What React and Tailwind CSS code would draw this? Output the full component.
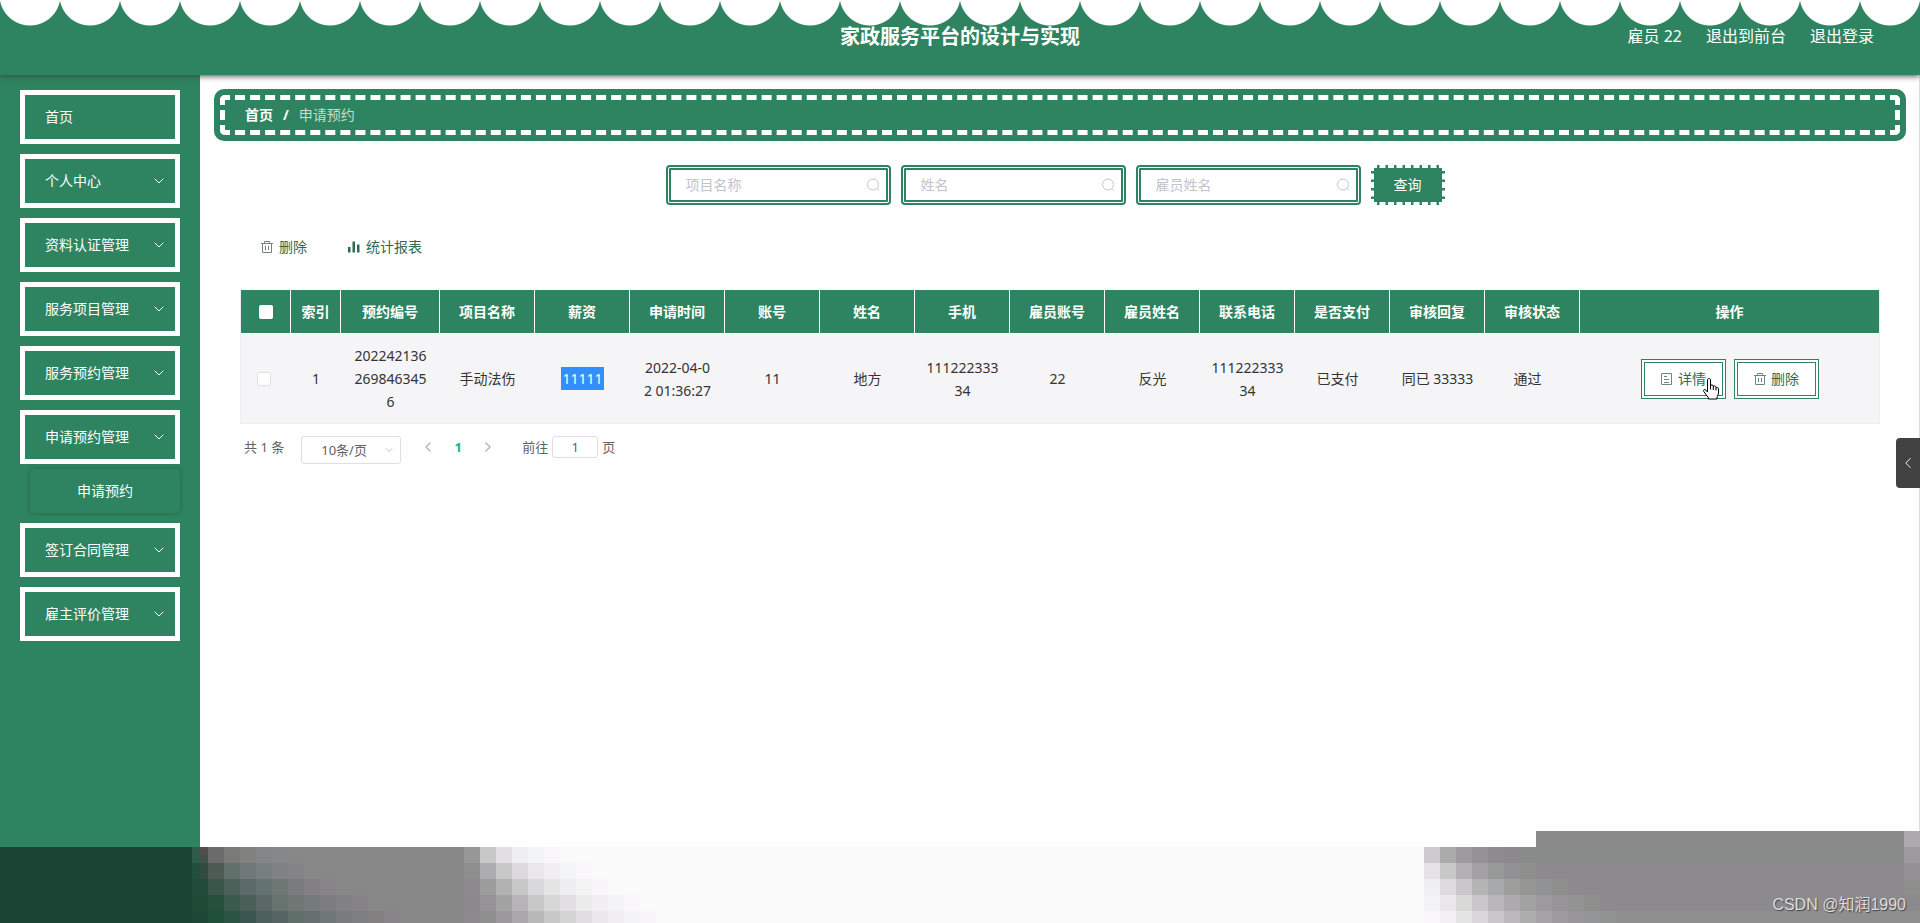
import { ChevronDown, ChevronLeft, ChevronRight } from 'lucide-react';

const menu = [
  { label: '首页' },
  { label: '个人中心', children: [] },
  { label: '资料认证管理', children: [] },
  { label: '服务项目管理', children: [] },
  { label: '服务预约管理', children: [] },
  { label: '申请预约管理', children: ['申请预约'] },
  { label: '签订合同管理', children: [] },
  { label: '雇主评价管理', children: [] },
];

const columns = [
  { key: 'no', label: '预约编号', width: 'w-[99px]' },
  { key: 'project', label: '项目名称', width: 'w-[95px]' },
  { key: 'salary', label: '薪资', width: 'w-[95px]' },
  { key: 'time', label: '申请时间', width: 'w-[95px]' },
  { key: 'account', label: '账号', width: 'w-[95px]' },
  { key: 'name', label: '姓名', width: 'w-[95px]' },
  { key: 'phone', label: '手机', width: 'w-[95px]' },
  { key: 'staffAccount', label: '雇员账号', width: 'w-[95px]' },
  { key: 'staffName', label: '雇员姓名', width: 'w-[95px]' },
  { key: 'staffPhone', label: '联系电话', width: 'w-[95px]' },
  { key: 'paid', label: '是否支付', width: 'w-[95px]', status: true },
  { key: 'reply', label: '审核回复', width: 'w-[95px]' },
  { key: 'state', label: '审核状态', width: 'w-[95px]', status: true },
];

const rows = [
  {
    no: '202242136\n269846345\n6',
    project: '手动法伤',
    salary: '11111',
    time: '2022-04-0\n2 01:36:27',
    account: '11',
    name: '地方',
    phone: '111222333\n34',
    staffAccount: '22',
    staffName: '反光',
    staffPhone: '111222333\n34',
    paid: '已支付',
    reply: '同已 33333',
    state: '通过',
  },
];

// 16px mosaic cells, one array per row
const fadeFromSidebar = [
  ['#2e5b4a', '#6b6b6b', '#7a7b78', '#828280', '#838587', '#85878b'],
  ['#20503c', '#4f5a52', '#61706a', '#707878', '#78807f', '#7f8184', '#848386'],
  ['#234b3b', '#38574a', '#4c605a', '#5c6b67', '#657370', '#6d7874', '#787c7d', '#828084', '#878386'],
  ['#1f4a36', '#27503c', '#3a5a4d', '#4a5f58', '#5b6764', '#67736f', '#6f7674', '#757a7a', '#7d7d80', '#828183', '#858385'],
  ['#1c4835', '#20503a', '#2b5445', '#3b5650', '#4c5f5b', '#566662', '#5f6f69', '#67706e', '#6f7877', '#787c7c', '#7c7e7f', '#828081', '#868486'],
];

const fadeToWhite = [
  ['#979797', '#c8c8c8', '#e2e0e3', '#efeff1', '#f3f4f8', '#f9f7fb'],
  ['#8f8f8f', '#adadaf', '#c8c8c8', '#dcdadd', '#e9e7ea', '#f1eff2', '#f4f5f9', '#f9f7fb'],
  ['#8d8a8e', '#9c9c9c', '#b2b2b2', '#c8c8c8', '#d9d9db', '#e5e5e5', '#eeeef0', '#f3f3f3', '#f8f6fa'],
  ['#8b888c', '#959396', '#a3a3a3', '#b6b4b8', '#c8c8c8', '#d7d7d7', '#e2e0e3', '#ebebeb', '#f1eff2', '#f4f4f8', '#f9f7fb'],
  ['#8c8a8d', '#8f8f8f', '#9c999d', '#aaa8ac', '#b9b9b9', '#c8c8c8', '#d4d4d4', '#e0dee1', '#e9e7ea', '#f0eef1', '#f4f4f8', '#f8f6fa'],
];

const fadeFromWhite = [
  ['#cdcbce', '#ababab', '#9c9a9d', '#949295', '#8f8c90', '#8c898d'],
  ['#e5e3e6', '#c8c8c8', '#b2b0b3', '#a3a1a4', '#989999', '#929193', '#8f8f8d'],
  ['#f0eff1', '#dddbde', '#c9c7ca', '#b3b4b3', '#a8a9aa', '#9e9e9d', '#969695', '#919294', '#8f908d'],
  ['#f4f4f8', '#e9e7ea', '#d9d9d8', '#c9c7ca', '#b9b7bb', '#acaaad', '#a2a2a3', '#9c9a9d', '#979597', '#929392', '#8f908d'],
  ['#f9f7fb', '#f2f0f3', '#e5e5e5', '#d9d7da', '#c9c7ca', '#bbb9bc', '#aeaeae', '#a5a3a6', '#9d9b9e', '#989698', '#949596', '#919292'],
];

function Cells({ data, x = 0, y = 0 }) {
  return data.map((row, r) =>
    row.map((fill, c) => (
      <rect key={`${r}-${c}`} x={x + c * 16} y={y + r * 16} width="16" height="16" fill={fill} />
    ))
  );
}

function Mosaic() {
  return (
    <div className="pointer-events-none absolute inset-x-0 bottom-0 flex h-[92px] items-end justify-between">
      <div className="absolute inset-x-0 bottom-0 h-[76px] bg-[#fafafa]" />
      <svg className="relative" width="664" height="76" shapeRendering="crispEdges" aria-hidden="true">
        <rect width="192" height="76" fill="#1a4534" />
        <rect x="192" width="272" height="76" fill="#888888" />
        <Cells data={fadeFromSidebar} x={192} />
        <rect x="200" width="8" height="8" fill="#554d49" />
        <rect x="200" y="8" width="8" height="8" fill="#405148" />
        <rect x="200" y="16" width="8" height="16" fill="#324a3f" />
        <Cells data={fadeToWhite} x={464} />
      </svg>
      <svg className="relative" width="496" height="92" shapeRendering="crispEdges" aria-hidden="true">
        <rect x="112" width="384" height="32" fill="#888988" />
        <rect x="96" y="16" width="400" height="16" fill="#898a8a" />
        <rect x="112" y="32" width="384" height="48" fill="#8d8a8e" />
        <rect x="144" y="80" width="352" height="12" fill="#8f8f8f" />
        <Cells data={fadeFromWhite} y={16} />
        <Cells data={[['#acaaae'], ['#9c9a9d'], ['#939194'], ['#8f8f8e']]} x={480} />
      </svg>
      <span className="absolute right-3.5 bottom-1.5 text-base leading-6 text-[#dcdcdc] [text-shadow:1px_1px_1px_#444] font-['Liberation_Sans','Noto_Sans_CJK_SC',sans-serif]">
        CSDN @知润1990
      </span>
    </div>
  );
}

function TrashIcon() {
  return (
    <svg className="h-3.5 w-3.5 shrink-0 text-[#6b8a7d]" viewBox="0 0 14 14" fill="none" stroke="currentColor" aria-hidden="true">
      <path d="M1 3.5h12M2.5 3.5v9h9v-9M4.5 3.5v-2h5v2M5.5 6v4M8.5 6v4" />
    </svg>
  );
}

function DocIcon() {
  return (
    <svg className="h-3.5 w-3.5 shrink-0 text-[#6b8a7d]" viewBox="0 0 14 14" fill="none" stroke="currentColor" aria-hidden="true">
      <path d="M1.5 1.5h10v11h-10zM4 4.5h3M4 7.5h5M4 10.5h5" />
    </svg>
  );
}

function ChartIcon() {
  return (
    <svg className="h-3.5 w-3.5 shrink-0" viewBox="0 0 14 14" fill="currentColor" aria-hidden="true">
      <path d="M1 7h2.5v5.5H1zM5.5 1.5H8v11H5.5zM10 4.5h2.5v8H10z" />
    </svg>
  );
}

function HandCursor() {
  return (
    <svg
      className="pointer-events-none absolute top-3.5 left-[57px] h-6 w-[19px]"
      viewBox="0 0 19 24"
      fill="#fff"
      stroke="#000"
      strokeLinejoin="round"
      aria-hidden="true"
    >
      <path d="M5.5 15V3c0-2 3-2 3 0v6c0-1.500 2.800-1.500 2.800 0v1c0-1.500 2.700-1.500 2.700.3v1c0-1.300 2.500-1.200 2.500.5v4.200c0 1.500-1.500 3-1.500 5v1H6.500v-1L1.800 14.500c-1-1.600.8-2.700 2-1.500z" />
      <path d="M8.500 9v3.500M11.300 10v3M14 11v2.500" fill="none" />
    </svg>
  );
}

function SearchInput({ name, label }) {
  return (
    <div className="relative mr-2.5">
      <input
        name={name}
        type="text"
        aria-label={label}
        placeholder={label}
        className="block h-10 w-[225px] rounded border-[5px] border-double border-[#2e8460] bg-white pr-8 pb-0.5 pl-[15px] text-sm leading-7 text-gray-600 placeholder:text-[#c0c4cc] outline-none"
      />
      <svg className="absolute top-3 right-2.5 h-4 w-4" viewBox="0 0 16 16" fill="none" stroke="#c0c4cc" aria-hidden="true">
        <circle cx="8" cy="7.5" r="5.5" />
        <path d="M12 11.5l2 2" />
      </svg>
    </div>
  );
}

function Sidebar() {
  return (
    <aside className="w-[200px] shrink-0 bg-[#2e8460] px-5 pt-[15px] text-sm text-white">
      <nav>
        <ul className="flex flex-col gap-2.5">
          {menu.map((item) => (
            <li key={item.label}>
              <button className="flex h-[54px] w-full items-center justify-between border-[5px] border-white pr-2 pl-5">
                <span>{item.label}</span>
                {item.children && <ChevronDown size={16} strokeWidth={1.5} />}
              </button>
              {item.children?.map((child) => (
                <a
                  key={child}
                  href="#"
                  className="mt-[5px] ml-2.5 flex h-11 items-center justify-center rounded shadow-[0_0_5px_rgba(0,0,0,0.25)]"
                >
                  {child}
                </a>
              ))}
            </li>
          ))}
        </ul>
      </nav>
    </aside>
  );
}

function DataTable() {
  return (
    <table className="w-full table-fixed border-separate border-spacing-0 border border-t-0 border-[#ebeef5] text-center text-sm leading-[23px]">
      <thead className="bg-[#2e8460] text-white">
        <tr className="h-11">
          <th className="w-[50px] border-r border-b border-white">
            <input type="checkbox" aria-label="全选" className="block mx-auto h-3.5 w-3.5 appearance-none rounded-xs bg-white" />
          </th>
          <th className="w-[50px] border-r border-b border-white font-bold">索引</th>
          {columns.map((col) => (
            <th key={col.key} className={`border-r border-b border-white font-bold ${col.width}`}>
              {col.label}
            </th>
          ))}
          <th className="border-b border-white font-bold">操作</th>
        </tr>
      </thead>
      <tbody className="bg-[#f5f5f7] text-[#333]">
        {rows.map((row, i) => (
          <tr key={row.no}>
            <td className="py-2.5 pr-1">
              <input
                type="checkbox"
                aria-label={`选择第 ${i + 1} 行`}
                className="block mx-auto h-3.5 w-3.5 appearance-none rounded-xs border border-[#dcdfe6] bg-white"
              />
            </td>
            <td>{i + 1}</td>
            {columns.map((col) => (
              <td key={col.key} className={`py-2.5 whitespace-pre ${col.status ? 'pr-2.5' : ''}`}>
                {col.key === 'salary' ? (
                  <mark className="inline-block bg-[#338fff] px-px text-white">{row[col.key]}</mark>
                ) : (
                  row[col.key]
                )}
              </td>
            ))}
            <td>
              <div className="flex justify-center gap-2 text-[#2e6b54]">
                <button className="relative flex h-10 w-[85px] items-center justify-center gap-1 border-4 border-double border-[#2e8460] bg-white">
                  <DocIcon />
                  详情
                  <HandCursor />
                </button>
                <button className="flex h-10 w-[85px] items-center justify-center gap-1 border-4 border-double border-[#2e8460] bg-white">
                  <TrashIcon />
                  删除
                </button>
              </div>
            </td>
          </tr>
        ))}
      </tbody>
    </table>
  );
}

function Pagination() {
  return (
    <div className="mt-3 flex items-start pl-1 text-[13px] leading-[22px] text-[#606266]">
      <span>共 1 条</span>
      <div className="relative ml-[17px]">
        <select
          aria-label="每页条数"
          className="block h-7 w-[100px] appearance-none rounded-[3px] border border-[#dcdfe6] bg-white pl-[19px] outline-none"
        >
          <option>10条/页</option>
        </select>
        <ChevronDown size={12} strokeWidth={2} className="pointer-events-none absolute top-2 right-1.5 text-[#c0c4cc]" />
      </div>
      <button aria-label="上一页" className="ml-[17px] flex h-[22px] w-5 items-center justify-center text-[#b0b4bc]">
        <ChevronLeft size={16} strokeWidth={2} />
      </button>
      <button className="h-[22px] w-10 font-bold text-[#18b58c]">1</button>
      <button aria-label="下一页" className="flex h-[22px] w-5 items-center justify-center text-[#b0b4bc]">
        <ChevronRight size={16} strokeWidth={2} />
      </button>
      <label htmlFor="page" className="ml-6">前往</label>
      <input
        id="page"
        type="text"
        defaultValue="1"
        className="mx-1 h-[22px] w-[46px] rounded-[3px] border border-[#dcdfe6] bg-white text-center leading-5 outline-none"
      />
      <span>页</span>
    </div>
  );
}

export default function App() {
  return (
    <div className="relative flex min-h-screen flex-col bg-[#fefefe] font-['Noto_Sans','Noto_Sans_CJK_SC',sans-serif]">
      <header className="relative z-10 grid h-[75px] grid-cols-[1fr_auto_1fr] items-center bg-[#2e8460] bg-[radial-gradient(circle_at_30px_-5px,white_30px,transparent_31px)] bg-[length:60px_60px] bg-repeat-x pb-0.5 text-white shadow-[0_1px_6px_#444]">
        <h1 className="col-start-2 text-xl font-bold">家政服务平台的设计与实现</h1>
        <nav className="flex justify-end gap-6 pr-[46px] pb-0.5 text-base">
          <span>雇员 22</span>
          <a href="#">退出到前台</a>
          <a href="#">退出登录</a>
        </nav>
      </header>

      <div className="flex flex-1">
        <Sidebar />
        <main className="min-w-0 flex-1 p-3.5 shadow-[inset_-1px_0_#ddd]">
          <div className="rounded-[10px] bg-[#2e8460] p-1.5">
            <nav className="flex h-10 items-center gap-2.5 rounded-[5px] border-[5px] border-dashed border-white pl-5 text-sm text-white">
              <a href="#" className="font-bold">首页</a>
              <span className="font-bold">/</span>
              <span className="text-[#c5dccf]">申请预约</span>
            </nav>
          </div>

          <form className="mt-6 flex justify-center">
            <SearchInput name="project" label="项目名称" />
            <SearchInput name="name" label="姓名" />
            <SearchInput name="staff" label="雇员姓名" />
            <button
              type="button"
              className="mr-2.5 h-10 w-[74px] border-[3px] border-dashed border-white bg-[#2e8460] text-sm text-white"
            >
              查询
            </button>
          </form>

          <div className="px-[26px]">
            <div className="flex h-[85px] items-center gap-10 pb-0.5 pl-5 text-sm text-[#2e6b54]">
              <button className="flex items-center gap-[5px]">
                <TrashIcon />
                删除
              </button>
              <button className="flex items-center gap-[5px]">
                <ChartIcon />
                统计报表
              </button>
            </div>
            <DataTable />
            <Pagination />
          </div>
        </main>
      </div>

      <button
        aria-label="展开"
        className="absolute top-[438px] right-0 flex h-[50px] w-6 items-center justify-center rounded-l-sm bg-[#424242] text-white"
      >
        <ChevronLeft size={18} strokeWidth={1.2} />
      </button>
      <Mosaic />
    </div>
  );
}
